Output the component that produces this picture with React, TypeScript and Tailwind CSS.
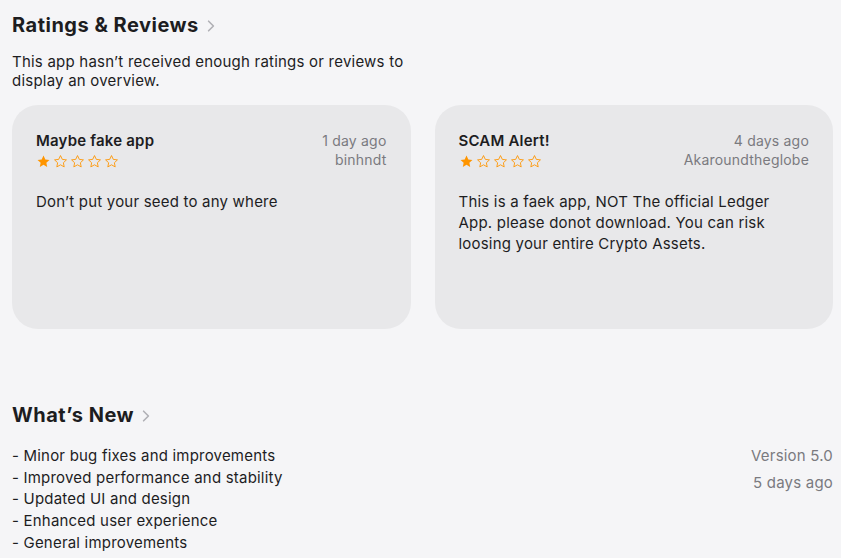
import React from 'react';

const STAR = 'M12 2.5l2.9 6.1 6.6.8-4.9 4.6 1.3 6.6L12 17.3l-5.9 3.3 1.3-6.6-4.9-4.6 6.6-.8z';

const Stars = ({ rating }: { rating: number }) => (
  <div className="flex items-center gap-[2px] mt-[3px]">
    {[0, 1, 2, 3, 4].map((i) => (
      <svg key={i} viewBox="0 0 24 24" className="w-[15px] h-[15px]">
        <path
          d={STAR}
          fill={i < rating ? '#ff9500' : 'none'}
          stroke="#ff9500"
          strokeWidth={i < rating ? 0 : 1.4}
          strokeLinejoin="round"
        />
      </svg>
    ))}
  </div>
);

const Chevron = () => (
  <svg viewBox="0 0 10 16" className="w-[8px] h-[14px] ml-[8px] mt-[2px]">
    <path d="M2 2l6 6-6 6" fill="none" stroke="#b0b0b5" strokeWidth="2" strokeLinecap="round" strokeLinejoin="round" />
  </svg>
);

interface Review {
  title: string;
  date: string;
  author: string;
  body: string;
  rating: number;
}

const reviews: Review[] = [
  { title: 'Maybe fake app', date: '1 day ago', author: 'binhndt', body: 'Don’t put your seed to any where', rating: 1 },
  {
    title: 'SCAM Alert!',
    date: '4 days ago',
    author: 'Akaroundtheglobe',
    body: 'This is a faek app, NOT The official Ledger App. please donot download. You can risk loosing your entire Crypto Assets.',
    rating: 1,
  },
];

const ReviewCard = ({ review }: { review: Review }) => (
  <div className="bg-[#e8e8ea] rounded-[26px] h-[224px] px-[24px] pt-[26px]">
    <div className="flex justify-between">
      <div>
        <div className="text-[15px] leading-[20px] font-semibold tracking-[0.2px] text-[#1d1d1f]">{review.title}</div>
        <Stars rating={review.rating} />
      </div>
      <div className="text-right text-[14px] leading-[19px] tracking-[0.2px] text-[#7a7a7f]">
        <div>{review.date}</div>
        <div>{review.author}</div>
      </div>
    </div>
    <p className="mt-[22px] text-[15px] leading-[21px] tracking-[0.2px] text-[#1d1d1f] pr-[8px]">{review.body}</p>
  </div>
);

const notes = [
  'Minor bug fixes and improvements',
  'Improved performance and stability',
  'Updated UI and design',
  'Enhanced user experience',
  'General improvements',
];

export default function App() {
  return (
    <div
      className="min-h-screen bg-[#f5f5f7] pl-[12px] pr-[8px] pt-[11px] text-[#1d1d1f]"
      style={{ fontFamily: 'Inter, "Noto Sans", sans-serif' }}
    >
      <h2 className="flex items-center text-[20px] leading-[28px] font-bold tracking-[0.5px]">
        Ratings &amp; Reviews
        <Chevron />
      </h2>
      <p className="mt-[13px] text-[15px] leading-[19px] tracking-[0.22px] text-[#1d1d1f] w-[410px]">
        This app hasn’t received enough ratings or reviews to display an overview.
      </p>
      <div className="grid grid-cols-2 gap-[24px] mt-[15px]">
        {reviews.map((r) => (
          <ReviewCard key={r.title} review={r} />
        ))}
      </div>

      <h2 className="flex items-center mt-[72px] text-[20px] leading-[28px] font-bold tracking-[0.5px]">
        What’s New
        <Chevron />
      </h2>
      <div className="flex justify-between mt-[16px]">
        <ul className="text-[15px] leading-[21.7px] tracking-[0.2px] text-[#1d1d1f]">
          {notes.map((n) => (
            <li key={n}>- {n}</li>
          ))}
        </ul>
        <div className="text-right text-[15px] leading-[27px] tracking-[0.2px] text-[#7a7a7f] -mt-[3px]">
          <div>Version 5.0</div>
          <div>5 days ago</div>
        </div>
      </div>
    </div>
  );
}
